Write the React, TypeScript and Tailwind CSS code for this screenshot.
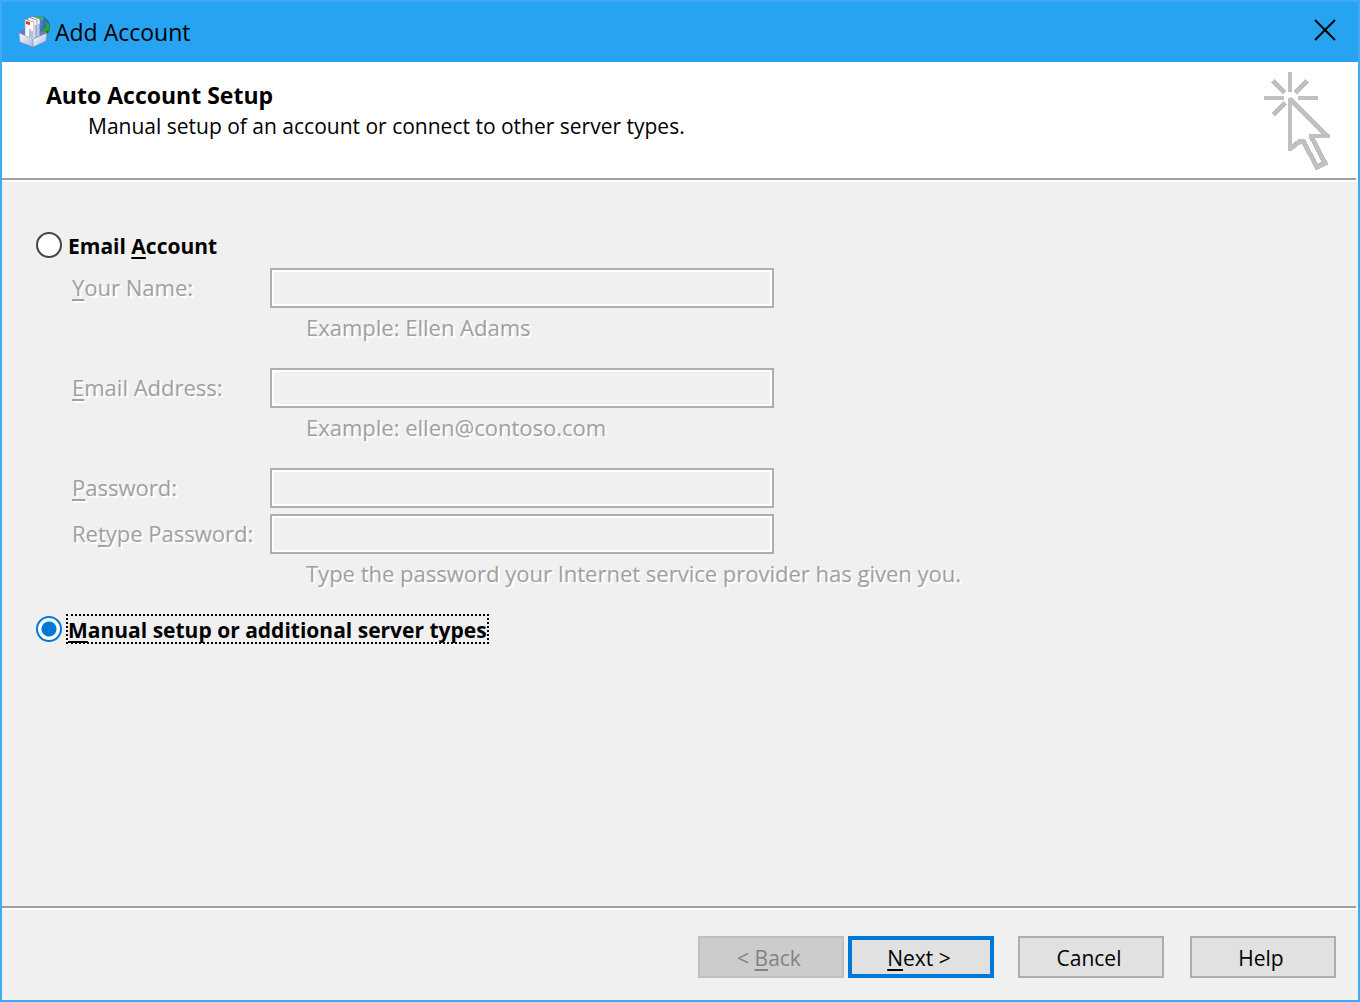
import { useState } from "react";
import type { ReactNode } from "react";

/* ═══════════════════════════════════════════════════════
   ICONS
   ═══════════════════════════════════════════════════════ */
function MailServerIcon() {
  return (
    <svg width="32" height="32" viewBox="0 0 32 32" fill="none" aria-hidden="true">
      <defs>
        <radialGradient id="globe" cx="0.4" cy="0.35" r="0.7">
          <stop offset="0" stopColor="#4f9be8" />
          <stop offset="1" stopColor="#153f9c" />
        </radialGradient>
        <linearGradient id="tray" x1="0" y1="0" x2="1" y2="1">
          <stop offset="0" stopColor="#ffffff" />
          <stop offset="1" stopColor="#a9b7de" />
        </linearGradient>
      </defs>
      {/* Globe */}
      <circle cx="21" cy="11" r="11" fill="url(#globe)" />
      <path d="M14 2C17 0 21 0 25 1L26 4L20 5L15 4Z" fill="#3fb35c" />
      <path d="M27 4L31 8L32 13L30 18L27 21L24 22L24 14L28 11Z" fill="#2fa03c" />
      <path d="M31 14L29 19L25 22L25 18Z" fill="#1d6a2c" />
      {/* Tray back */}
      <path d="M1 16L6 13L28 16L29 18L16 25Z" fill="#6d7db4" />
      {/* Letters */}
      <path d="M13 0L22 3V22L13 18Z" fill="#ffffff" stroke="#6f7fae" strokeWidth="0.8" />
      <path d="M10 1L19 4V23L10 19Z" fill="#ffffff" stroke="#6f7fae" strokeWidth="0.8" />
      <path d="M7 3L16 6V26L7 22Z" fill="#ffffff" stroke="#8b99c4" strokeWidth="0.8" />
      <path d="M8 5L12 6V9L8 8Z" fill="#e43a1c" />
      <path d="M12 13V21M14 15V22M18 9V22M21 8V21" stroke="#5f72ac" strokeWidth="0.9" />
      {/* Tray front */}
      <path d="M1 17L15 23V31L2 26Z" fill="url(#tray)" stroke="#8493c0" strokeWidth="0.6" />
      <path d="M15 23L29 17L28 25L15 31Z" fill="url(#tray)" stroke="#8493c0" strokeWidth="0.6" />
    </svg>
  );
}

function ClickCursorIcon() {
  return (
    <svg
      width="68"
      height="100"
      viewBox="0 0 68 100"
      fill="none"
      stroke="#c0c0c0"
      strokeWidth="4"
      shapeRendering="crispEdges"
      aria-hidden="true"
    >
      <path d="M26 0V20M0 26H20M34 26H54" />
      <path d="M9 9L21 21M43 9L31 21M9 43L21 31" strokeWidth="5" />
      <path d="M26 26V79M45 64H66" />
      <path d="M26 27L63 64M26 77L36 69H39L53 95L61 91L47 64" strokeWidth="5" />
    </svg>
  );
}

/* Letter that works as the keyboard shortcut */
function Key({ children }: { children: ReactNode }) {
  return <u className="underline decoration-2 underline-offset-[3px]">{children}</u>;
}

/* Two-tone divider that stops just short of the right edge */
function Divider() {
  return (
    <div className="border-b-2 border-white">
      <div className="mr-0.5 h-0.5 bg-[#a0a0a0]" />
    </div>
  );
}

/* ═══════════════════════════════════════════════════════
   FORM PARTS
   ═══════════════════════════════════════════════════════ */
const ETCHED = "text-[#a0a0a0] [text-shadow:2px_2px_0_#fff]";

function RadioOption({
  id,
  checked,
  onChange,
  focused = false,
  className = "",
  children,
}: {
  id: string;
  checked: boolean;
  onChange: () => void;
  focused?: boolean;
  className?: string;
  children: ReactNode;
}) {
  return (
    <div className={`flex h-[34px] items-center gap-1 ${className}`}>
      <input
        type="radio"
        id={id}
        name="account-kind"
        checked={checked}
        onChange={onChange}
        className="size-[26px] shrink-0 appearance-none rounded-full border-2 border-[#444] bg-white outline-none checked:border-[#0078d7] checked:bg-[radial-gradient(circle,#0078d7_7px,#fff_8px)]"
      />
      <label
        htmlFor={id}
        className={`h-[30px] border-2 border-dotted text-[21px] leading-[28px] font-bold ${
          focused ? "border-black" : "border-transparent"
        }`}
      >
        {children}
      </label>
    </div>
  );
}

function Field({
  id,
  label,
  hint,
  type = "text",
  disabled,
}: {
  id: string;
  label: ReactNode;
  hint?: string;
  type?: string;
  disabled: boolean;
}) {
  return (
    <div className="grid grid-cols-[198px_1fr]">
      <label htmlFor={id} className={`leading-[38px] ${ETCHED}`}>
        {label}
      </label>
      <input
        id={id}
        type={type}
        disabled={disabled}
        className="h-10 w-full max-w-[504px] border-2 border-[#adadb3] bg-[#f0f0f0] px-2 inset-ring-2 inset-ring-white outline-none"
      />
      {hint && <p className={`col-start-2 h-10 pl-9 leading-[38px] ${ETCHED}`}>{hint}</p>}
    </div>
  );
}

function DialogButton({
  variant = "normal",
  className = "",
  children,
}: {
  variant?: "normal" | "primary" | "disabled";
  className?: string;
  children: ReactNode;
}) {
  const look = {
    normal: "border-2 border-[#adadad] bg-[#e1e1e1]",
    primary: "border-4 border-[#0078d7] bg-[#e1e1e1]",
    disabled: "border-2 border-[#bfbfbf] bg-[#cccccc] text-[#838383]",
  }[variant];

  return (
    <button
      type="button"
      disabled={variant === "disabled"}
      className={`flex h-[42px] w-[146px] items-center justify-center pt-[3px] pr-1 text-[21px] ${look} ${className}`}
    >
      <span>{children}</span>
    </button>
  );
}

/* ═══════════════════════════════════════════════════════
   DIALOG
   ═══════════════════════════════════════════════════════ */
export default function App() {
  const [kind, setKind] = useState<"email" | "manual">("manual");
  const locked = kind === "manual";

  return (
    <div className="flex min-h-screen flex-col border-2 border-[#3daaf2] bg-[#f0f0f0] font-['Open_Sans','Noto_Sans',sans-serif] text-[22px] text-black">
      {/* Title bar */}
      <div className="flex h-[60px] items-center bg-[#26a4f2] pr-[22px] pl-4">
        <MailServerIcon />
        <h1 className="ml-[5px] flex-1 text-[23px]">Add Account</h1>
        <button type="button" aria-label="Close" className="mb-1 flex size-[22px] items-center justify-center">
          <svg width="22" height="22" viewBox="0 0 22 22" fill="none">
            <path d="M1 1L21 21M21 1L1 21" stroke="black" strokeWidth="2" />
          </svg>
        </button>
      </div>

      {/* Page heading */}
      <header className="bg-white">
        <div className="flex h-[116px] justify-between pt-[10px] pr-[26px] pl-11">
          <div className="pt-2">
            <h2 className="text-[23px] leading-[30px] font-bold">Auto Account Setup</h2>
            <p className="pl-[42px] text-[21px] leading-[32px]">
              Manual setup of an account or connect to other server types.
            </p>
          </div>
          <ClickCursorIcon />
        </div>
        <Divider />
      </header>

      <form className="flex-1 pt-[46px] pl-[34px]">
        <RadioOption id="kind-email" checked={kind === "email"} onChange={() => setKind("email")}>
          Email <Key>A</Key>ccount
        </RadioOption>

        <div className="mt-[6px] pl-9">
          <Field id="name" label={<><Key>Y</Key>our Name:</>} hint="Example: Ellen Adams" disabled={locked} />
          <div className="mt-5">
            <Field
              id="email"
              label={<><Key>E</Key>mail Address:</>}
              hint="Example: ellen@contoso.com"
              disabled={locked}
            />
          </div>
          <div className="mt-5 flex flex-col gap-[6px]">
            <Field id="password" type="password" label={<><Key>P</Key>assword:</>} disabled={locked} />
            <Field
              id="retype"
              type="password"
              label={<>Re<Key>t</Key>ype Password:</>}
              hint="Type the password your Internet service provider has given you."
              disabled={locked}
            />
          </div>
        </div>

        <RadioOption
          id="kind-manual"
          checked={kind === "manual"}
          onChange={() => setKind("manual")}
          focused
          className="mt-[18px]"
        >
          <Key>M</Key>anual setup or additional server types
        </RadioOption>
      </form>

      {/* Footer buttons */}
      <footer>
        <Divider />
        <div className="flex justify-end pt-[26px] pr-[22px] pb-[22px]">
          <DialogButton variant="disabled">
            &lt; <Key>B</Key>ack
          </DialogButton>
          <DialogButton variant="primary" className="ml-1">
            <Key>N</Key>ext &gt;
          </DialogButton>
          <DialogButton className="ml-6">Cancel</DialogButton>
          <DialogButton className="ml-[26px]">Help</DialogButton>
        </div>
      </footer>
    </div>
  );
}
